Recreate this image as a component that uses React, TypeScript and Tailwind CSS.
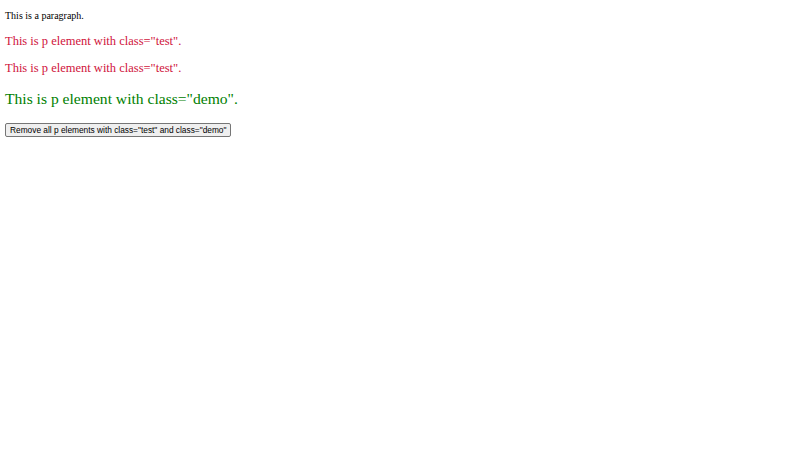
export default function App() {
  const serif = "font-['Liberation_Serif',serif]";
  return (
    <div className="min-h-[450px] bg-white p-[5px] pt-0">
      <p className={`${serif} my-[10px] text-[10px] leading-[11.5px] text-black`}>This is a paragraph.</p>
      <p className={`${serif} my-[12.5px] text-[12.5px] leading-[14.4px] text-[#d0143c]`}>This is p element with class="test".</p>
      <p className={`${serif} my-[12.5px] text-[12.5px] leading-[14.4px] text-[#d0143c]`}>This is p element with class="test".</p>
      <p className={`${serif} my-[15px] text-[15.6px] leading-[17.6px] text-[#008000]`}>This is p element with class="demo".</p>
      <div className="flex">
        <button className="rounded-[2px] border border-[#767676] bg-[#efefef] px-[4px] py-[1px] font-['Liberation_Sans',sans-serif] text-[8.33px] leading-[10px] text-black">
          Remove all p elements with class="test" and class="demo"
        </button>
      </div>
    </div>
  );
}
